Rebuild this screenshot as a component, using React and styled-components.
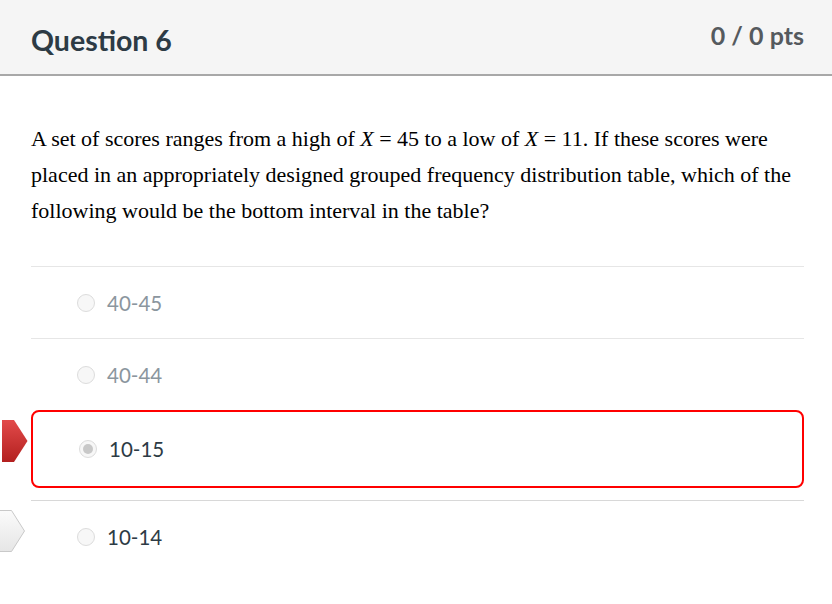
import React from "react"
import styled, { createGlobalStyle } from "styled-components"

const GlobalStyle = createGlobalStyle`
  html, body {
    margin: 0;
    padding: 0;
    background: #ffffff;
  }
  body {
    font-family: "Lato", "Liberation Sans", sans-serif;
    color: #2d3b45;
  }
`

const Page = styled.div`
  width: 832px;
  height: 604px;
  overflow: hidden;
  background: #fff;
`

const Header = styled.header`
  height: 74px;
  background: #f5f5f5;
  border-bottom: 2px solid #a8a8a8;
  display: flex;
  justify-content: space-between;
  align-items: flex-start;
  padding: 0 28px 0 31px;
`

const Title = styled.h2`
  margin: 0;
  padding-top: 23px;
  font-family: "Lato", sans-serif;
  font-weight: 700;
  font-size: 28.5px;
  line-height: 34px;
  color: #2d3b45;
`

const Points = styled.div`
  padding-top: 19px;
  font-family: "Lato", sans-serif;
  font-weight: 700;
  font-size: 25px;
  line-height: 32px;
  color: #555a5e;
`

const Body = styled.div`
  padding: 45px 20px 0 31px;
`

const QuestionText = styled.p`
  margin: 0 0 37px;
  font-family: "Liberation Serif", "Times New Roman", serif;
  font-size: 22px;
  line-height: 36px;
  color: #000;
`

const Var = styled.i`
  font-style: italic;
  padding-right: 1px;
`

const Answers = styled.div`
  display: flex;
  flex-direction: column;
  margin-right: 8px;
`

const Answer = styled.div`
  position: relative;
  display: flex;
  align-items: center;
  gap: 12px;
  box-sizing: border-box;
  height: ${(p) => (p.$selected ? "78px" : "72px")};
  padding-left: 46px;
  border-top: 1px solid ${(p) => (p.$dark ? "#d8d8d8" : "#e6e6e6")};
  ${(p) =>
    p.$selected &&
    `
    border: 2px solid #ff0000;
    border-radius: 8px;
    margin-bottom: 12px;
  `}
`

const Radio = styled.span`
  box-sizing: border-box;
  flex: none;
  width: 18px;
  height: 18px;
  border-radius: 50%;
  border: 1px solid #dcdcdc;
  background: #f7f7f7;
  display: flex;
  align-items: center;
  justify-content: center;
  &::after {
    content: "";
    display: ${(p) => (p.$checked ? "block" : "none")};
    width: 10px;
    height: 10px;
    border-radius: 50%;
    background: #c8c8c8;
  }
`

const Label = styled.span`
  font-family: "Lato", sans-serif;
  font-size: 20.5px;
  color: ${(p) => (p.$muted ? "#8b969e" : "#2d3b45")};
`

const Arrow = styled.svg`
  position: absolute;
  left: -31px;
  top: ${(p) => p.$top}px;
  width: 26px;
  height: 42px;
`

const RedArrow = ({ top }) => (
  <Arrow $top={top} viewBox="0 0 26 42">
    <defs>
      <linearGradient id="redg" x1="0" y1="0" x2="0" y2="1">
        <stop offset="0" stopColor="#e24a4a" />
        <stop offset="1" stopColor="#b3201f" />
      </linearGradient>
    </defs>
    <polygon points="0,0 12,0 25.5,21 12,42 0,42" fill="url(#redg)" />
  </Arrow>
)

const GreyArrow = ({ top }) => (
  <Arrow $top={top} viewBox="0 0 26 42">
    <defs>
      <linearGradient id="greyg" x1="0" y1="0" x2="0" y2="1">
        <stop offset="0" stopColor="#fbfbfb" />
        <stop offset="1" stopColor="#e6e6e6" />
      </linearGradient>
    </defs>
    <polygon
      points="-1,0.5 11.5,0.5 24.5,21 11.5,41.5 -1,41.5"
      fill="url(#greyg)"
      stroke="#c9c9c9"
      strokeWidth="1"
    />
  </Arrow>
)

const answers = [
  { label: "40-45", muted: true },
  { label: "40-44", muted: true },
  { label: "10-15", selected: true, arrow: "red", top: 8 },
  { label: "10-14", arrow: "grey", dark: true, top: 9 },
]

export default function App() {
  return (
    <Page>
      <GlobalStyle />
      <Header>
        <Title>Question 6</Title>
        <Points>0 / 0 pts</Points>
      </Header>
      <Body>
        <QuestionText>
          A set of scores ranges from a high of <Var>X</Var>&#8201;=&nbsp;45 to
          a low of <Var>X</Var>&#8201;=&nbsp;11. If these scores were placed in
          an appropriately designed grouped frequency distribution table, which
          of the following would be the bottom interval in the table?
        </QuestionText>
        <Answers>
          {answers.map((a) => (
            <Answer key={a.label} $selected={a.selected} $dark={a.dark}>
              {a.arrow === "red" && <RedArrow top={a.top} />}
              {a.arrow === "grey" && <GreyArrow top={a.top} />}
              <Radio $checked={a.selected} />
              <Label $muted={a.muted}>{a.label}</Label>
            </Answer>
          ))}
        </Answers>
      </Body>
    </Page>
  )
}
